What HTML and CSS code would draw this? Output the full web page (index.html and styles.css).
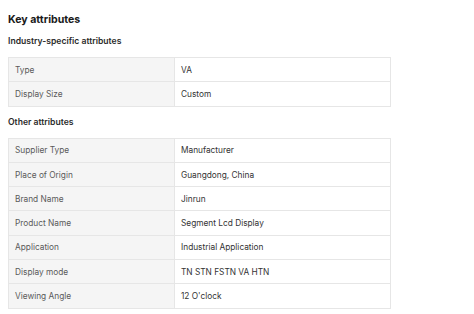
FILE: index.html
```html
<!DOCTYPE html>
<html>
<head>
<meta charset="utf-8">
<link rel="stylesheet" href="styles.css">
</head>
<body>
<div class="page">
  <h2 class="title">Key attributes</h2>
  <h3 class="subtitle">Industry-specific attributes</h3>
  <table class="attrs">
    <tr><td class="k">Type</td><td class="v">VA</td></tr>
    <tr><td class="k">Display Size</td><td class="v">Custom</td></tr>
  </table>
  <h3 class="subtitle other">Other attributes</h3>
  <table class="attrs">
    <tr><td class="k">Supplier Type</td><td class="v">Manufacturer</td></tr>
    <tr><td class="k">Place of Origin</td><td class="v">Guangdong, China</td></tr>
    <tr><td class="k">Brand Name</td><td class="v">Jinrun</td></tr>
    <tr><td class="k">Product Name</td><td class="v">Segment Lcd Display</td></tr>
    <tr><td class="k">Application</td><td class="v">Industrial Application</td></tr>
    <tr><td class="k">Display mode</td><td class="v">TN STN FSTN VA HTN</td></tr>
    <tr><td class="k">Viewing Angle</td><td class="v">12 O'clock</td></tr>
  </table>
</div>
</body>
</html>
```
FILE: styles.css
```css
html, body { margin: 0; padding: 0; background: #fff; }
body { font-family: Inter, "Noto Sans", sans-serif; color: #222; }
.page { padding: 12px 8px 0 8px; width: 383px; }
.title { margin: 0; font-size: 10.6px; font-weight: 700; line-height: 15px; color: #1a1a1a; }
.subtitle { margin: 8px 0 0 0; font-size: 8.6px; font-weight: 600; line-height: 12px; color: #2a2a2a; }
.subtitle.other { margin-top: 9px; }
.attrs { margin-top: 10px; width: 100%; border-collapse: collapse; font-size: 8.3px; }
.attrs td { border: 1px solid #e6e6e6; height: 24.3px; box-sizing: border-box; padding: 0 6px; vertical-align: middle; }
.attrs .k { width: 166px; background: #f5f5f5; color: #5a5a5a; }
.attrs .v { background: #fff; color: #333; }
```
